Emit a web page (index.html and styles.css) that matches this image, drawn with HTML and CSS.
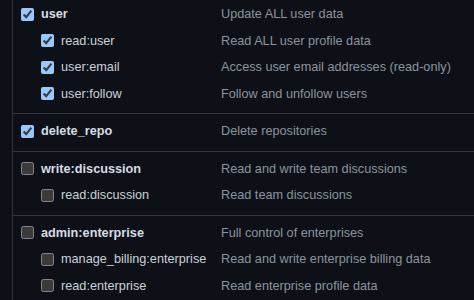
FILE: index.html
```html
<!DOCTYPE html>
<html lang="en">
<head>
    <meta charset="UTF-8">
    <meta name="viewport" content="width=device-width, initial-scale=1.0">
    <title>Select scopes</title>
    <link rel="stylesheet" href="styles.css">
</head>
<body>
    <div class="scopes">
        <div class="scope-group">
            <label class="scope-row">
                <span class="scope-name parent"><input type="checkbox" checked>user</span>
                <span class="scope-desc">Update ALL user data</span>
            </label>
            <label class="scope-row">
                <span class="scope-name child"><input type="checkbox" checked>read:user</span>
                <span class="scope-desc">Read ALL user profile data</span>
            </label>
            <label class="scope-row">
                <span class="scope-name child"><input type="checkbox" checked>user:email</span>
                <span class="scope-desc">Access user email addresses (read-only)</span>
            </label>
            <label class="scope-row">
                <span class="scope-name child"><input type="checkbox" checked>user:follow</span>
                <span class="scope-desc">Follow and unfollow users</span>
            </label>
        </div>

        <div class="scope-group">
            <label class="scope-row">
                <span class="scope-name parent"><input type="checkbox" checked>delete_repo</span>
                <span class="scope-desc">Delete repositories</span>
            </label>
        </div>

        <div class="scope-group">
            <label class="scope-row">
                <span class="scope-name parent"><input type="checkbox">write:discussion</span>
                <span class="scope-desc">Read and write team discussions</span>
            </label>
            <label class="scope-row">
                <span class="scope-name child"><input type="checkbox">read:discussion</span>
                <span class="scope-desc">Read team discussions</span>
            </label>
        </div>

        <div class="scope-group">
            <label class="scope-row">
                <span class="scope-name parent"><input type="checkbox">admin:enterprise</span>
                <span class="scope-desc">Full control of enterprises</span>
            </label>
            <label class="scope-row">
                <span class="scope-name child"><input type="checkbox">manage_billing:enterprise</span>
                <span class="scope-desc">Read and write enterprise billing data</span>
            </label>
            <label class="scope-row">
                <span class="scope-name child"><input type="checkbox">read:enterprise</span>
                <span class="scope-desc">Read enterprise profile data</span>
            </label>
        </div>
    </div>
</body>
</html>
```

FILE: styles.css
```css
html {
    color-scheme: dark;
}

body {
    font-family: 'Liberation Sans', Arial, sans-serif;
    font-size: 12.7px;
    background-color: #0d1117;
    color: #c9d1d9;
    margin: 0;
    padding: 0;
    overflow: hidden;
}

.scopes {
    margin: -3px 0 0 12px;
    border-left: 1px solid #30363d;
}

.scope-group {
    padding: 4px 0 6px;
    border-bottom: 1px solid #30363d;
}

.scope-row {
    display: flex;
    align-items: center;
    height: 26.5px;
}

.scope-name {
    display: flex;
    align-items: center;
    box-sizing: border-box;
    width: 208px;
    flex-shrink: 0;
    white-space: nowrap;
}

.scope-name input {
    width: 13px;
    height: 13px;
    margin: 0 7px 0 0;
}

.scope-name.parent {
    padding-left: 8px;
    font-weight: bold;
    color: #d7dde3;
}

.scope-name.child {
    padding-left: 28px;
}

.scope-desc {
    color: #8b949e;
}
```
